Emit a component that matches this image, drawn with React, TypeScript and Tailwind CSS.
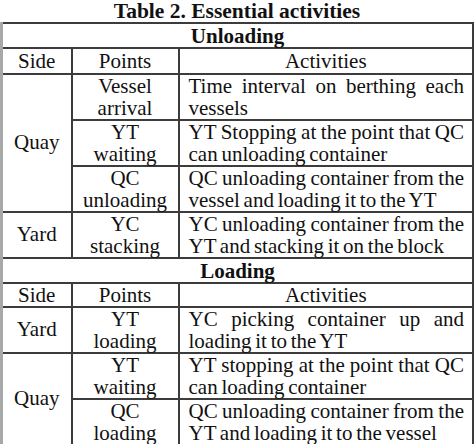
import React from "react";

const serif = { fontFamily: '"Liberation Serif", "Times New Roman", serif' };

const cell = "border-2 border-[#3c3c3c] p-0";
const side = "border-l-[3px] border-l-[#a8a8a8]";
const act = "text-justify leading-[22px] pl-[9px] pr-[8px] align-middle [word-spacing:-1.5px]";

export default function App() {
  return (
    <div
      className="w-[474px] h-[444px] bg-white overflow-hidden text-[#111] text-[21px]"
      style={serif}
    >
      <div className="h-[22px] leading-[22px] text-center font-bold text-[21.5px]">
        Table 2. Essential activities
      </div>
      <table className="w-[474px] border-collapse table-fixed border-l-[3px] border-l-[#a8a8a8]">
        <colgroup>
          <col className="w-[70px]" />
          <col className="w-[107px]" />
          <col />
        </colgroup>
        <tbody>
          <tr className="h-[25px]">
            <td colSpan={3} className={`${cell} ${side} text-center font-bold leading-[22px]`}>
              Unloading
            </td>
          </tr>
          <tr className="h-[26px]">
            <td className={`${cell} ${side} text-center leading-[22px]`}>Side</td>
            <td className={`${cell} text-center leading-[22px]`}>Points</td>
            <td className={`${cell} text-center leading-[22px]`}>Activities</td>
          </tr>
          <tr className="h-[46px]">
            <td rowSpan={3} className={`${cell} ${side} text-center`}>Quay</td>
            <td className={`${cell} text-center leading-[22px]`}>Vessel<br />arrival</td>
            <td className={`${cell} ${act}`}>Time interval on berthing each vessels</td>
          </tr>
          <tr className="h-[44px]">
            <td className={`${cell} text-center leading-[22px]`}>YT<br />waiting</td>
            <td className={`${cell} ${act}`}>YT Stopping at the point that QC can unloading container</td>
          </tr>
          <tr className="h-[46px]">
            <td className={`${cell} text-center leading-[22px]`}>QC<br />unloading</td>
            <td className={`${cell} ${act}`}>QC unloading container from the vessel and loading it to the YT</td>
          </tr>
          <tr className="h-[46px]">
            <td className={`${cell} ${side} text-center`}>Yard</td>
            <td className={`${cell} text-center leading-[22px]`}>YC<br />stacking</td>
            <td className={`${cell} ${act}`}>YC unloading container from the YT and stacking it on the block</td>
          </tr>
          <tr className="h-[25px]">
            <td colSpan={3} className={`${cell} ${side} text-center font-bold leading-[22px]`}>
              Loading
            </td>
          </tr>
          <tr className="h-[24px]">
            <td className={`${cell} ${side} text-center leading-[22px]`}>Side</td>
            <td className={`${cell} text-center leading-[22px]`}>Points</td>
            <td className={`${cell} text-center leading-[22px]`}>Activities</td>
          </tr>
          <tr className="h-[45px]">
            <td className={`${cell} ${side} text-center`}>Yard</td>
            <td className={`${cell} text-center leading-[22px]`}>YT<br />loading</td>
            <td className={`${cell} ${act}`}>YC picking container up and loading it to the YT</td>
          </tr>
          <tr className="h-[46px]">
            <td rowSpan={2} className={`${cell} ${side} text-center`}>Quay</td>
            <td className={`${cell} text-center leading-[22px]`}>YT<br />waiting</td>
            <td className={`${cell} ${act}`}>YT stopping at the point that QC can loading container</td>
          </tr>
          <tr className="h-[46px]">
            <td className={`${cell} text-center leading-[22px]`}>QC<br />loading</td>
            <td className={`${cell} ${act}`}>QC unloading container from the YT and loading it to the vessel</td>
          </tr>
        </tbody>
      </table>
    </div>
  );
}
